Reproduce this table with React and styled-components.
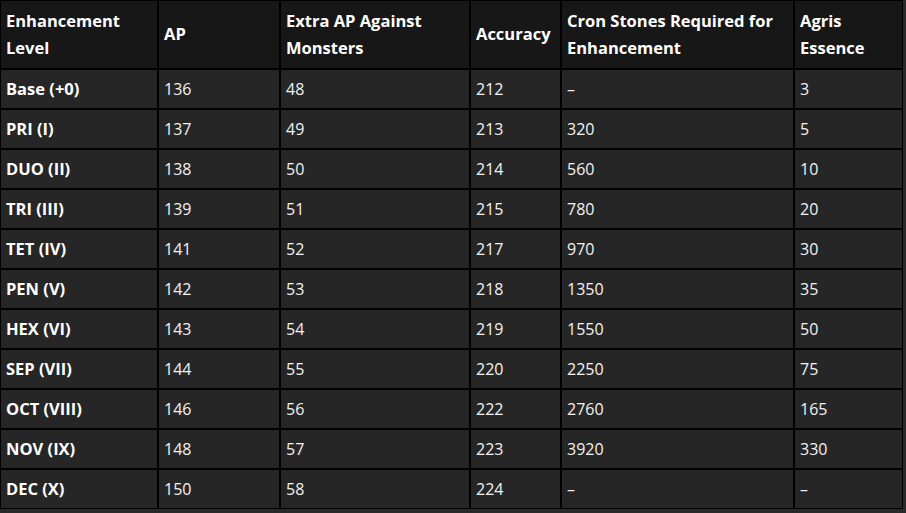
import React from "react";
import styled, { createGlobalStyle } from "styled-components";

const GlobalStyle = createGlobalStyle`
  html, body {
    margin: 0;
    padding: 0;
    background: #2a2a2a;
  }
  body {
    font-family: "Open Sans", "Noto Sans", "DejaVu Sans", sans-serif;
  }
`;

const columns = [158, 122, 190, 91, 233, 109];

const headers = [
  "Enhancement Level",
  "AP",
  "Extra AP Against Monsters",
  "Accuracy",
  "Cron Stones Required for Enhancement",
  "Agris Essence",
];

const rows = [
  ["Base (+0)", "136", "48", "212", "–", "3"],
  ["PRI (I)", "137", "49", "213", "320", "5"],
  ["DUO (II)", "138", "50", "214", "560", "10"],
  ["TRI (III)", "139", "51", "215", "780", "20"],
  ["TET (IV)", "141", "52", "217", "970", "30"],
  ["PEN (V)", "142", "53", "218", "1350", "35"],
  ["HEX (VI)", "143", "54", "219", "1550", "50"],
  ["SEP (VII)", "144", "55", "220", "2250", "75"],
  ["OCT (VIII)", "146", "56", "222", "2760", "165"],
  ["NOV (IX)", "148", "57", "223", "3920", "330"],
  ["DEC (X)", "150", "58", "224", "–", "–"],
];

function App() {
  return (
    <>
      <GlobalStyle />
      <Table>
        <colgroup>
          {columns.map((w, i) => (
            <col key={i} style={{ width: w }} />
          ))}
        </colgroup>
        <thead>
          <tr>
            {headers.map((h) => (
              <HeadCell key={h}>{h}</HeadCell>
            ))}
          </tr>
        </thead>
        <tbody>
          {rows.map((row) => (
            <tr key={row[0]}>
              {row.map((value, i) => (
                <Cell key={i} $bold={i === 0}>
                  {value}
                </Cell>
              ))}
            </tr>
          ))}
        </tbody>
      </Table>
    </>
  );
}

export default App;

const Table = styled.table`
  width: 903px;
  table-layout: fixed;
  border-collapse: separate;
  border-spacing: 0;
  color: #fff;
  font-size: 16px;
  line-height: 27px;
`;

const HeadCell = styled.th`
  box-sizing: border-box;
  height: 69px;
  padding: 0 5px 2px;
  border: 1px solid #000;
  background: #171717;
  font-size: 16.5px;
  font-weight: 700;
  text-align: left;
  vertical-align: middle;
`;

const Cell = styled.td`
  box-sizing: border-box;
  height: 40px;
  padding: ${(p) => (p.$bold ? "0 5px 2px" : "0 5px")};
  border: 1px solid #000;
  background: #262626;
  font-size: ${(p) => (p.$bold ? "16.5px" : "16px")};
  font-weight: ${(p) => (p.$bold ? 700 : 400)};
  color: ${(p) => (p.$bold ? "#fff" : "#f2f2f2")};
  vertical-align: middle;
  white-space: nowrap;
`;
